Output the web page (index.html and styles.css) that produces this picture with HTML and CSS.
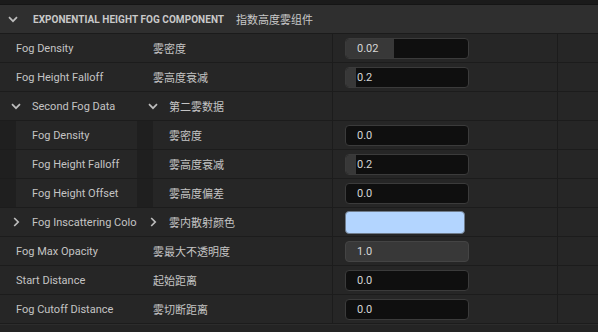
FILE: index.html
```html
<!DOCTYPE html>
<html lang="zh">
<head>
<meta charset="utf-8">
<title>Exponential Height Fog Component</title>
<link rel="stylesheet" href="styles.css">
</head>
<body>
<div class="panel">
  <div class="topstrip"></div>
  <div class="header">
    <svg class="chev-down hdr" width="10" height="7" viewBox="0 0 10 7"><path d="M1 1.2 L5 5.2 L9 1.2" fill="none" stroke="#bdbdbd" stroke-width="1.7"/></svg>
    <span class="htitle">EXPONENTIAL HEIGHT FOG COMPONENT</span>
    <span class="hcn">指数高度雾组件</span>
  </div>

  <div class="row">
    <div class="name"><span class="label">Fog Density</span></div>
    <div class="cn"><span class="label">雾密度</span></div>
    <div class="val"><div class="box"><div class="fill" style="width:48px"></div><span class="num">0.02</span></div></div>
    <div class="extra"></div>
  </div>

  <div class="row">
    <div class="name"><span class="label">Fog Height Falloff</span></div>
    <div class="cn"><span class="label">雾高度衰减</span></div>
    <div class="val"><div class="box"><div class="fill" style="width:10px"></div><span class="num">0.2</span></div></div>
    <div class="extra"></div>
  </div>

  <div class="row">
    <div class="name group"><svg class="chev" width="10" height="7" viewBox="0 0 10 7"><path d="M1 1.2 L5 5.2 L9 1.2" fill="none" stroke="#bdbdbd" stroke-width="1.7"/></svg><span class="label">Second Fog Data</span></div>
    <div class="cn group"><svg class="chev" width="10" height="7" viewBox="0 0 10 7"><path d="M1 1.2 L5 5.2 L9 1.2" fill="none" stroke="#bdbdbd" stroke-width="1.7"/></svg><span class="label">第二雾数据</span></div>
    <div class="val"></div>
    <div class="extra"></div>
  </div>

  <div class="row">
    <div class="name nested"><span class="label">Fog Density</span></div>
    <div class="cn nested"><span class="label">雾密度</span></div>
    <div class="val"><div class="box"><span class="num">0.0</span></div></div>
    <div class="extra"></div>
  </div>

  <div class="row">
    <div class="name nested"><span class="label">Fog Height Falloff</span></div>
    <div class="cn nested"><span class="label">雾高度衰减</span></div>
    <div class="val"><div class="box"><div class="fill" style="width:10px"></div><span class="num">0.2</span></div></div>
    <div class="extra"></div>
  </div>

  <div class="row">
    <div class="name nested"><span class="label">Fog Height Offset</span></div>
    <div class="cn nested"><span class="label">雾高度偏差</span></div>
    <div class="val"><div class="box"><span class="num">0.0</span></div></div>
    <div class="extra"></div>
  </div>

  <div class="row">
    <div class="name group"><svg class="chev right" width="7" height="10" viewBox="0 0 7 10"><path d="M1.2 1 L5.2 5 L1.2 9" fill="none" stroke="#bdbdbd" stroke-width="1.7"/></svg><span class="label">Fog Inscattering Color</span></div>
    <div class="cn group"><svg class="chev right" width="7" height="10" viewBox="0 0 7 10"><path d="M1.2 1 L5.2 5 L1.2 9" fill="none" stroke="#bdbdbd" stroke-width="1.7"/></svg><span class="label">雾内散射颜色</span></div>
    <div class="val"><div class="swatch"></div></div>
    <div class="extra"></div>
  </div>

  <div class="row">
    <div class="name"><span class="label">Fog Max Opacity</span></div>
    <div class="cn"><span class="label">雾最大不透明度</span></div>
    <div class="val"><div class="box full"><span class="num">1.0</span></div></div>
    <div class="extra"></div>
  </div>

  <div class="row">
    <div class="name"><span class="label">Start Distance</span></div>
    <div class="cn"><span class="label">起始距离</span></div>
    <div class="val"><div class="box"><span class="num">0.0</span></div></div>
    <div class="extra"></div>
  </div>

  <div class="row">
    <div class="name"><span class="label">Fog Cutoff Distance</span></div>
    <div class="cn"><span class="label">雾切断距离</span></div>
    <div class="val"><div class="box"><span class="num">0.0</span></div></div>
    <div class="extra"></div>
  </div>

  <div class="bottom"></div>
</div>
</body>
</html>
```

FILE: styles.css
```css
html, body {
  margin: 0;
  padding: 0;
  background: #242424;
}
body {
  width: 598px;
  height: 332px;
  overflow: hidden;
  font-family: Roboto, "Noto Sans CJK SC", sans-serif;
  font-size: 11px;
  color: #c4c4c4;
}
.panel {
  display: flex;
  flex-direction: column;
}
.topstrip {
  height: 4px;
  background: #1b1b1b;
  border-bottom: 1px solid #151515;
}
.header {
  height: 28px;
  background: #2f2f2f;
  border-bottom: 1px solid #1b1b1b;
  display: flex;
  align-items: center;
  padding-left: 8px;
  white-space: nowrap;
}
.header .hdr {
  margin-right: 15px;
}
.htitle {
  font-weight: 700;
  font-size: 10px;
  color: #c9c9c9;
  letter-spacing: 0.05px;
}
.hcn {
  margin-left: 12px;
  font-family: "Noto Sans CJK SC", sans-serif;
  font-size: 11px;
  color: #c9c9c9;
}
.row {
  display: grid;
  grid-template-columns: 137px 195px 225px 1fr;
  height: 28px;
  background: #262626;
  border-bottom: 1px solid #1c1c1c;
}
.name, .cn {
  display: flex;
  align-items: center;
  overflow: hidden;
  white-space: nowrap;
  padding-left: 16px;
}
.cn {
  font-family: "Noto Sans CJK SC", sans-serif;
}
.label {
  display: flex;
  align-items: center;
  height: 100%;
  flex: 1;
  overflow: hidden;
}
.group {
  padding-left: 11px;
}
.group .chev {
  flex: none;
  margin-right: 11px;
}
.group .chev.right {
  margin-left: 2px;
  margin-right: 12px;
}
.nested {
  padding-left: 16px;
  background: #1f1f1f;
}
.nested .label {
  background: #262626;
  padding-left: 16px;
}
.val {
  border-left: 1px solid #1c1c1c;
  display: flex;
  align-items: center;
  padding-left: 12px;
}
.extra {
  border-left: 1px solid #1c1c1c;
}
.box {
  position: relative;
  width: 124px;
  height: 21px;
  box-sizing: border-box;
  border: 1px solid #3b3b3b;
  border-radius: 4px;
  background: #0f0f0f;
  overflow: hidden;
  display: flex;
  align-items: center;
}
.box .fill {
  position: absolute;
  left: 0;
  top: 0;
  bottom: 0;
  background: #383838;
}
.box.full {
  background: #383838;
  border-color: #444444;
}
.num {
  position: relative;
  padding-left: 11px;
  color: #d6d6d6;
}
.swatch {
  width: 120px;
  height: 23px;
  box-sizing: border-box;
  border: 1px solid #6f7c8c;
  border-radius: 4px;
  background: #b3d5ff;
}
.bottom {
  flex: 1;
  height: 8px;
  border-top: 1px solid #2c2c2c;
  background: #252525;
}
```
